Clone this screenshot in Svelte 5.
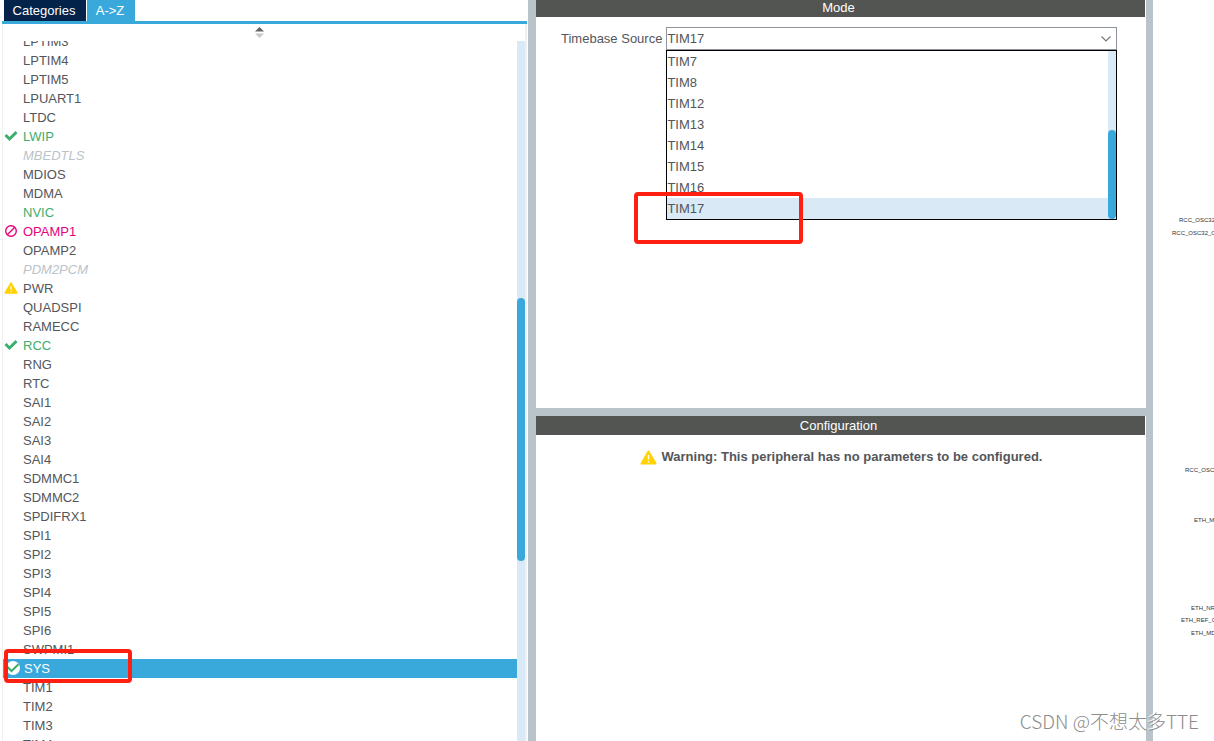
<script lang="ts">
	type Item = { name: string; status?: 'ok' | 'enabled' | 'unavailable' | 'conflict' | 'warning' };

	const peripherals: Item[] = [
		{ name: 'LPTIM3' },
		{ name: 'LPTIM4' },
		{ name: 'LPTIM5' },
		{ name: 'LPUART1' },
		{ name: 'LTDC' },
		{ name: 'LWIP', status: 'ok' },
		{ name: 'MBEDTLS', status: 'unavailable' },
		{ name: 'MDIOS' },
		{ name: 'MDMA' },
		{ name: 'NVIC', status: 'enabled' },
		{ name: 'OPAMP1', status: 'conflict' },
		{ name: 'OPAMP2' },
		{ name: 'PDM2PCM', status: 'unavailable' },
		{ name: 'PWR', status: 'warning' },
		{ name: 'QUADSPI' },
		{ name: 'RAMECC' },
		{ name: 'RCC', status: 'ok' },
		{ name: 'RNG' },
		{ name: 'RTC' },
		{ name: 'SAI1' },
		{ name: 'SAI2' },
		{ name: 'SAI3' },
		{ name: 'SAI4' },
		{ name: 'SDMMC1' },
		{ name: 'SDMMC2' },
		{ name: 'SPDIFRX1' },
		{ name: 'SPI1' },
		{ name: 'SPI2' },
		{ name: 'SPI3' },
		{ name: 'SPI4' },
		{ name: 'SPI5' },
		{ name: 'SPI6' },
		{ name: 'SWPMI1' },
		{ name: 'SYS', status: 'ok' },
		{ name: 'TIM1' },
		{ name: 'TIM2' },
		{ name: 'TIM3' },
		{ name: 'TIM4' }
	];

	const timebases = ['TIM7', 'TIM8', 'TIM12', 'TIM13', 'TIM14', 'TIM15', 'TIM16', 'TIM17'];

	const pins = [
		{ label: 'RCC_OSC32_IN', x: 26, y: 216 },
		{ label: 'RCC_OSC32_OUT', x: 19, y: 229 },
		{ label: 'RCC_OSC_IN', x: 32, y: 466 },
		{ label: 'ETH_MDC', x: 41, y: 516 },
		{ label: 'ETH_NRST', x: 38, y: 604 },
		{ label: 'ETH_REF_CLK', x: 28, y: 616 },
		{ label: 'ETH_MDIO', x: 38, y: 629 }
	];

	let selected = $state('SYS');
	let timebase = $state('TIM17');
</script>

{#snippet warningIcon()}
	<svg class="warning-icon" viewBox="0 0 17 15" aria-hidden="true">
		<path d="M8.5 1.5 15.5 13.5H1.5Z" fill="#ffd200" stroke="#ffd200" stroke-width="2" stroke-linejoin="round" />
		<path d="M8.5 5V9.5M8.5 11V12.5" stroke="#fff" stroke-width="1.5" />
	</svg>
{/snippet}

<div class="workbench">
	<aside class="sidebar">
		<div class="tabs">
			<button class="tab">Categories</button>
			<button class="tab active">A-&gt;Z</button>
		</div>
		<div class="tree">
			<button class="sorter" aria-label="Sort">
				<svg viewBox="0 0 9 11">
					<path d="M4.5 0 9 4.5H0Z" fill="#646464" />
					<path d="M0 6.5H9L4.5 11Z" fill="#c8c8c8" />
				</svg>
			</button>
			<div class="scroll-area">
				<ul class="items">
					{#each peripherals as item}
						<li>
							<button
								class="item {item.status ?? ''}"
								class:selected={item.name === selected}
								onclick={() => (selected = item.name)}
							>
								<span class="status">
									{#if item.status === 'ok'}
										<svg class="check" viewBox="0 0 14 14" aria-hidden="true">
											<path d="M1.5 6 5.5 10 12.5 3.2" fill="none" stroke="#3dae6c" stroke-width="3" />
										</svg>
									{:else if item.status === 'conflict'}
										<svg viewBox="0 0 14 14" aria-hidden="true">
											<circle cx="7" cy="7" r="5.3" fill="none" stroke="#e6007e" stroke-width="1.4" />
											<path d="M3.3 10.7 10.7 3.3" stroke="#e6007e" stroke-width="1.4" />
										</svg>
									{:else if item.status === 'warning'}
										{@render warningIcon()}
									{/if}
								</span>
								{item.name}
							</button>
						</li>
					{/each}
				</ul>
				<div class="track">
					<div class="space-before"></div>
					<div class="thumb"></div>
					<div class="space-after"></div>
				</div>
			</div>
		</div>
		<div class="mark mark-item"></div>
	</aside>

	<main class="details">
		<section class="mode">
			<h2>Mode</h2>
			<div class="field">
				<label for="timebase">Timebase Source</label>
				<div class="combo">
					<select id="timebase" bind:value={timebase}>
						{#each timebases as name}
							<option>{name}</option>
						{/each}
					</select>
					<svg class="chevron" viewBox="0 0 10 6" aria-hidden="true">
						<path d="M0.5 0.5 5 5 9.5 0.5" fill="none" stroke="#777" stroke-width="1.2" />
					</svg>
					<div class="popup">
						<ul role="listbox" aria-label="Timebase Source">
							{#each timebases as name}
								<li role="option" aria-selected={name === timebase}>{name}</li>
							{/each}
						</ul>
						<div class="track">
							<div class="popup-space"></div>
							<div class="thumb popup-thumb"></div>
						</div>
					</div>
					<div class="mark mark-option"></div>
				</div>
			</div>
		</section>
		<section class="configuration">
			<h2>Configuration</h2>
			<p class="notice">
				{@render warningIcon()}
				Warning: This peripheral has no parameters to be configured.
			</p>
		</section>
	</main>

	<section class="pinout">
		{#each pins as pin}
			<span class="pin" style="left: {pin.x}px; top: {pin.y}px">{pin.label}</span>
		{/each}
	</section>

	<div class="watermark">CSDN @不想太多TTE</div>
</div>

<style>
	:global(body) {
		margin: 0;
		overflow: hidden;
	}

	.workbench {
		position: relative;
		display: grid;
		grid-template-columns: minmax(0, 528fr) minmax(0, 625fr) minmax(0, 61fr);
		height: 100vh;
		overflow: hidden;
		background: #fff;
		color: #53565a;
		font-family: 'Liberation Sans', Arial, sans-serif;
		font-size: 13px;
	}

	.workbench * {
		box-sizing: border-box;
	}

	button,
	select {
		border: 0;
		padding: 0;
		margin: 0;
		background: none;
		font: inherit;
		color: inherit;
	}

	ul {
		list-style: none;
		margin: 0;
		padding: 0;
	}

	.sidebar {
		position: relative;
		display: flex;
		flex-direction: column;
		min-height: 0;
		padding: 0 1px 0 2px;
	}

	.tabs {
		display: flex;
		gap: 1px;
		height: 24px;
		padding-left: 2px;
		border-bottom: 3px solid #39a9dc;
	}

	.tab {
		width: 82px;
		padding-right: 2px;
		background: #03234b;
		color: #fff;
	}

	.tab.active {
		width: 48px;
		background: #39a9dc;
	}

	.tree {
		flex: 1;
		min-height: 0;
		display: flex;
		flex-direction: column;
		border-left: 1px solid #f0f0f0;
		border-right: 2px solid #f0f0f0;
	}

	.sorter {
		display: flex;
		justify-content: center;
		align-items: center;
		flex: none;
		height: 17px;
		padding-right: 10px;
	}

	.sorter svg {
		width: 9px;
		height: 11px;
	}

	.scroll-area {
		flex: 1;
		min-height: 0;
		display: flex;
		overflow: hidden;
	}

	/* the list is scrolled part of the way into its first row */
	.items {
		flex: 1;
		margin-top: -9px;
	}

	.item {
		display: flex;
		align-items: center;
		width: 100%;
		height: 19px;
		padding-bottom: 1px;
		text-align: left;
	}

	.status {
		display: flex;
		flex: none;
		width: 20px;
		padding-left: 1px;
	}

	.status svg {
		width: 14px;
		height: 14px;
	}

	.ok,
	.enabled {
		color: #3dae6c;
	}

	.unavailable {
		color: #b9c4ca;
		font-style: italic;
	}

	.conflict {
		color: #e6007e;
	}

	.selected {
		background: #39a9dc;
		color: #fff;
	}

	.selected .status {
		width: 21px;
		padding-left: 3px;
	}

	.selected .check {
		border-radius: 50%;
		background: #fff;
	}

	.selected .check path {
		stroke-width: 2;
	}

	.track {
		display: flex;
		flex-direction: column;
		flex: none;
		width: 8px;
		background: #d9e9f5;
	}

	.thumb {
		flex: 263;
		border-radius: 4px;
		background: #39a9dc;
	}

	.space-before {
		flex: 257;
	}

	.space-after {
		flex: 180;
	}

	.details {
		display: flex;
		flex-direction: column;
		gap: 8px;
		padding: 0 7px 0 8px;
		background: #b9c4ca;
	}

	section {
		background: #fff;
	}

	h2 {
		margin: 0 1px 0 0;
		height: 19px;
		padding-right: 4px;
		background: #525552;
		color: #fff;
		font-size: 13px;
		font-weight: 400;
		line-height: 19px;
		text-align: center;
	}

	.mode {
		flex: 408;
	}

	.mode h2 {
		margin-top: -2px;
	}

	.configuration {
		flex: 325;
	}

	.field {
		display: flex;
		align-items: center;
		gap: 4px;
		padding: 10px 29px 0 25px;
	}

	.combo {
		position: relative;
		flex: 1;
	}

	select {
		display: block;
		width: 100%;
		height: 23px;
		border: 1px solid #8e9499;
		border-radius: 0;
		background: #fff;
		appearance: none;
	}

	.chevron {
		position: absolute;
		top: 9px;
		right: 6px;
		width: 10px;
		height: 6px;
	}

	.popup {
		position: absolute;
		top: 23px;
		left: 0;
		right: 0;
		display: flex;
		border: 1px solid #000;
		background: #fff;
	}

	.popup ul {
		flex: 1;
	}

	.popup li {
		height: 21px;
		line-height: 21px;
	}

	.popup li[aria-selected='true'] {
		background: #d9e9f5;
	}

	.popup-thumb {
		flex: 89;
	}

	.popup-space {
		flex: 79;
	}

	.notice {
		display: flex;
		justify-content: center;
		align-items: center;
		gap: 5px;
		margin: 13px 0 0;
		font-weight: 700;
		line-height: 18px;
	}

	.notice .warning-icon {
		width: 17px;
		height: 15px;
	}

	.mark {
		position: absolute;
		border: 4px solid #ff2012;
		border-radius: 4px;
	}

	.mark-item {
		top: 649px;
		left: 4px;
		width: 128px;
		height: 34px;
	}

	.mark-option {
		top: 165px;
		left: -32px;
		width: 169px;
		height: 52px;
	}

	.pinout {
		position: relative;
		overflow: hidden;
	}

	.pin {
		position: absolute;
		color: #333;
		font-size: 6px;
		line-height: 8px;
		white-space: nowrap;
	}

	.watermark {
		position: absolute;
		right: 15px;
		bottom: 8px;
		color: #8c8c8c;
		font-family: 'Noto Sans CJK SC', sans-serif;
		font-size: 19px;
		font-weight: 300;
		line-height: 24px;
		text-shadow: -1px -1px 0 #fff;
	}
</style>
